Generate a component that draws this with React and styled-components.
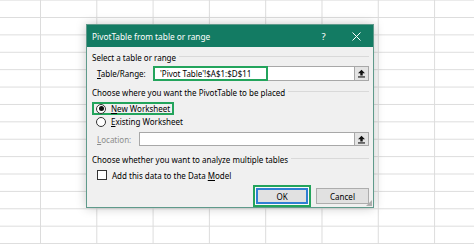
import React from "react";
import styled, { createGlobalStyle } from "styled-components";

const Global = createGlobalStyle`
  html, body {
    margin: 0;
    padding: 0;
    background: #fff;
  }
  body {
    font-family: "Noto Sans", "Open Sans", sans-serif;
  }
`;

const Sheet = styled.div`
  position: relative;
  width: 474px;
  height: 244px;
  overflow: hidden;
  background-color: #fff;
  background-image:
    linear-gradient(to right, #dcdcdc 1px, transparent 1px),
    linear-gradient(to bottom, #dcdcdc 1px, transparent 1px);
  background-size: 56.3px 100%, 100% 17.4px;
  background-position: 40px 0, 0 17px;
`;

const Dialog = styled.div`
  position: absolute;
  left: 86px;
  top: 24px;
  width: 288px;
  height: 184px;
  box-sizing: border-box;
  border: 1px solid #5f9a8b;
  background: #f0f0f0;
  box-shadow: 0 0 10px rgba(0, 0, 0, 0.22);
  display: flex;
  flex-direction: column;
  font-size: 8px;
  color: #000;
`;

const TitleBar = styled.div`
  height: 22px;
  flex-shrink: 0;
  background: #137b63;
  color: #fff;
  display: flex;
  align-items: center;
  padding-left: 5px;
  font-size: 8.3px;
`;

const TitleText = styled.div`
  flex: 1;
`;

const TitleButton = styled.div`
  width: 33px;
  height: 22px;
  display: flex;
  align-items: center;
  justify-content: center;
  font-size: 9.5px;
`;

const Body = styled.div`
  flex: 1;
  display: flex;
  flex-direction: column;
  padding: 3px 4px 0 5px;
  position: relative;
`;

const Heading = styled.div`
  height: 14px;
  display: flex;
  align-items: center;
  gap: 3px;
  margin-top: ${(p) => p.$top || 0}px;
  white-space: nowrap;
  &::after {
    content: "";
    flex: 1;
    height: 1px;
    background: #d9d9d9;
    margin-top: -1px;
  }
`;

const FieldRow = styled.div`
  height: ${(p) => p.$h || 15}px;
  margin-top: ${(p) => p.$top || 0}px;
  display: flex;
  align-items: center;
  padding-left: 5px;
`;

const Label = styled.div`
  width: ${(p) => p.$w}px;
  flex-shrink: 0;
  color: ${(p) => (p.$disabled ? "#8c8c8c" : "#000")};
`;

const Key = styled.span`
  text-decoration: underline;
  text-underline-offset: 1px;
`;

const InputWrap = styled.div`
  position: relative;
  flex: 1;
  height: 100%;
  display: flex;
`;

const Input = styled.div`
  flex: 1;
  box-sizing: border-box;
  height: 100%;
  border: 1px solid #a8a8a8;
  border-right: none;
  background: #fff;
  display: flex;
  align-items: center;
  padding-left: 6px;
  white-space: nowrap;
`;

const Highlight = styled.div`
  position: absolute;
  left: 0;
  top: 0;
  width: ${(p) => p.$w}px;
  height: 100%;
  box-sizing: border-box;
  border: 2px solid #23a45c;
  pointer-events: none;
`;

const RefButton = styled.div`
  width: 15px;
  height: 100%;
  box-sizing: border-box;
  border: 1px solid #a8a8a8;
  background: #e4e4e4;
  display: flex;
  align-items: center;
  justify-content: center;
`;

const OptionRow = styled.div`
  height: 13px;
  margin-top: ${(p) => p.$top || 0}px;
  display: flex;
`;

const OptionBox = styled.div`
  display: flex;
  align-items: center;
  gap: 5px;
  box-sizing: border-box;
  height: 100%;
  padding: 0 2px 0 2px;
  border: 2px solid ${(p) => (p.$highlight ? "#23a45c" : "transparent")};
`;

const Radio = styled.span`
  width: 10px;
  height: 10px;
  box-sizing: border-box;
  border-radius: 50%;
  border: 1px solid #333;
  background: #fff;
  display: flex;
  align-items: center;
  justify-content: center;
  &::after {
    content: "";
    width: 5px;
    height: 5px;
    border-radius: 50%;
    background: ${(p) => (p.$checked ? "#111" : "transparent")};
  }
`;

const CheckRow = styled.div`
  height: 14px;
  margin-top: 2px;
  display: flex;
  align-items: center;
  gap: 5px;
  padding-left: 5px;
`;

const Checkbox = styled.span`
  width: 10px;
  height: 10px;
  box-sizing: border-box;
  border: 1px solid #333;
  background: #fff;
`;

const ButtonRow = styled.div`
  margin-top: 3px;
  display: flex;
  justify-content: flex-end;
  align-items: center;
  gap: 5px;
`;

const DefaultFrame = styled.div`
  border: 2px solid #23a45c;
  padding: 1px;
  background: #fafafa;
`;

const Button = styled.div`
  width: ${(p) => p.$w}px;
  height: 16px;
  box-sizing: border-box;
  border: 1px solid ${(p) => (p.$default ? "#2f7fd3" : "#adadad")};
  box-shadow: ${(p) => (p.$default ? "inset 0 0 0 1px #2f7fd3" : "none")};
  background: #e1e1e1;
  display: flex;
  align-items: center;
  justify-content: center;
`;

const Grip = styled.div`
  position: absolute;
  right: 1px;
  bottom: 1px;
  width: 6px;
  height: 6px;
  background-image: radial-gradient(circle, #a9a9a9 0.7px, transparent 0.8px);
  background-size: 2px 2px;
  clip-path: polygon(100% 0, 100% 100%, 0 100%);
`;

const CollapseIcon = () => (
  <svg width="9" height="9" viewBox="0 0 9 9">
    <path d="M4.5 0.8 L8 4.3 H5.7 V6.6 H3.3 V4.3 H1 Z" fill="#111" />
    <rect x="1" y="7.4" width="7" height="1.1" fill="#111" />
  </svg>
);

const CloseIcon = () => (
  <svg width="9" height="9" viewBox="0 0 9 9">
    <path d="M0.5 0.5 L8.5 8.5 M8.5 0.5 L0.5 8.5" stroke="#fff" strokeWidth="1" />
  </svg>
);

export default function App() {
  return (
    <>
      <Global />
      <Sheet>
        <Dialog>
          <TitleBar>
            <TitleText>PivotTable from table or range</TitleText>
            <TitleButton>?</TitleButton>
            <TitleButton>
              <CloseIcon />
            </TitleButton>
          </TitleBar>
          <Body>
            <Heading>Select a table or range</Heading>
            <FieldRow $top={2}>
              <Label $w={56}>
                <Key>T</Key>able/Range:
              </Label>
              <InputWrap>
                <Input>'Pivot Table'!$A$1:$D$11</Input>
                <Highlight $w={115} />
              </InputWrap>
              <RefButton>
                <CollapseIcon />
              </RefButton>
            </FieldRow>
            <Heading $top={4}>Choose where you want the PivotTable to be placed</Heading>
            <OptionRow $top={3}>
              <OptionBox $highlight>
                <Radio $checked />
                <span>
                  <Key>N</Key>ew Worksheet
                </span>
              </OptionBox>
            </OptionRow>
            <OptionRow>
              <OptionBox>
                <Radio />
                <span>
                  <Key>E</Key>xisting Worksheet
                </span>
              </OptionBox>
            </OptionRow>
            <FieldRow $top={4} $h={14}>
              <Label $w={42} $disabled>
                <Key>L</Key>ocation:
              </Label>
              <InputWrap>
                <Input />
              </InputWrap>
              <RefButton>
                <CollapseIcon />
              </RefButton>
            </FieldRow>
            <Heading $top={6}>Choose whether you want to analyze multiple tables</Heading>
            <CheckRow>
              <Checkbox />
              <span>
                Add this data to the Data <Key>M</Key>odel
              </span>
            </CheckRow>
            <ButtonRow>
              <DefaultFrame>
                <Button $w={52} $default>
                  OK
                </Button>
              </DefaultFrame>
              <Button $w={53}>Cancel</Button>
            </ButtonRow>
            <Grip />
          </Body>
        </Dialog>
      </Sheet>
    </>
  );
}
